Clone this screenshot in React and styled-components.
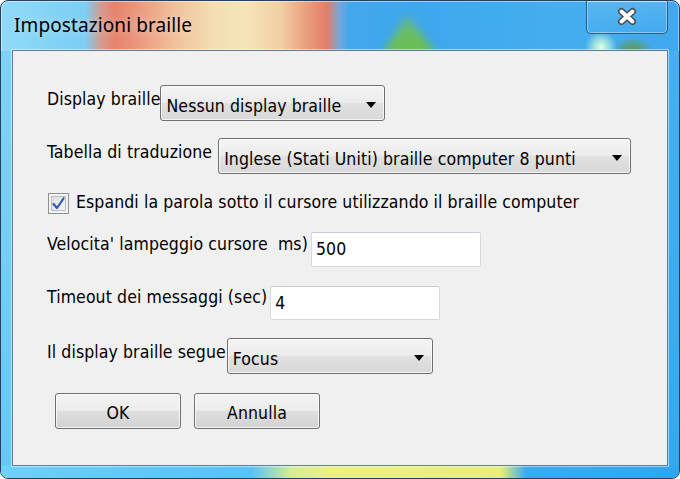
import React from "react";
import styled, { createGlobalStyle } from "styled-components";

const Global = createGlobalStyle`
  html, body { margin: 0; padding: 0; background: #ffffff; }
  body { width: 680px; height: 479px; overflow: hidden; }
`;

const Window = styled.div`
  box-sizing: border-box;
  width: 680px;
  height: 479px;
  border: 1px solid #24415e;
  border-radius: 8px;
  padding: 0 11px 12px 11px;
  display: flex;
  flex-direction: column;
  position: relative;
  overflow: hidden;
  box-shadow: inset 0 0 0 1px rgba(255, 255, 255, 0.45);
  background:
    radial-gradient(ellipse 16px 16px at 600px 46px, rgba(225, 255, 228, 1) 0%, rgba(200, 250, 210, 0.6) 50%, rgba(200, 250, 210, 0) 100%),
    radial-gradient(ellipse 20px 12px at 632px 48px, rgba(96, 150, 70, 0.9) 0%, rgba(96, 150, 70, 0.5) 50%, rgba(100, 150, 70, 0) 100%),
    linear-gradient(90deg,
      #8fdaf8 0px, #7ccef4 84px, #d49a90 100px, #e6826c 114px,
      #eb9c80 140px, #f0c29c 175px, #f4dfb4 215px, #f5e4b8 245px, #f1cfa4 280px,
      #ea9e7e 305px, #e27e68 326px, #7aa6d6 338px, #42a8ee 348px, #3ea7ee 420px,
      #44aef0 560px, #3fa8ee 680px);
`;

const GlassBlur = styled.div`
  position: absolute;
  left: 378px;
  top: 14px;
  width: 62px;
  height: 40px;
  filter: blur(4px);
  pointer-events: none;
`;

const GlassTriangle = styled.div`
  width: 100%;
  height: 100%;
  clip-path: polygon(45% 0, 95% 100%, 5% 100%);
  background: linear-gradient(180deg, rgba(120, 196, 96, 0.6), rgba(108, 190, 86, 1) 60%);
`;

const BottomGlow = styled.div`
  position: absolute;
  left: 0;
  right: 0;
  bottom: 0;
  height: 13px;
  pointer-events: none;
  background: linear-gradient(90deg,
    #6fd0f8 0px, #56c2f6 250px, #d6ec9a 290px, #eef07e 330px,
    #e8ee78 500px, #3aaaf2 525px, #2fa6f2 680px);
`;

const SideGlow = styled.div`
  position: absolute;
  top: 50px;
  bottom: 12px;
  ${(p) => (p.$side === "left" ? "left: 0;" : "right: 0;")}
  width: 12px;
  pointer-events: none;
  background: ${(p) =>
    p.$side === "left"
      ? "linear-gradient(180deg, #7fd2f6, #67c8f6)"
      : "linear-gradient(180deg, #48aef0, #35a8f2)"};
`;

const TitleBar = styled.div`
  height: 49px;
  display: flex;
  align-items: flex-start;
  position: relative;
  z-index: 1;
`;

const Title = styled.div`
  font-family: "Noto Sans", "Open Sans", sans-serif;
  font-size: 19px;
  letter-spacing: 0.1px;
  color: #000;
  line-height: 24px;
  padding-top: 12px;
  padding-left: 2px;
  text-shadow: 0 0 8px rgba(255, 255, 255, 0.5);
`;

const CloseButton = styled.div`
  margin-left: auto;
  width: 82px;
  height: 33px;
  box-sizing: border-box;
  border: 1px solid rgba(30, 55, 85, 0.7);
  border-top: none;
  border-radius: 0 0 5px 5px;
  box-shadow: inset 0 0 0 1px rgba(255, 255, 255, 0.35);
  background: linear-gradient(180deg, rgba(255, 255, 255, 0.12), rgba(255, 255, 255, 0.02));
  display: flex;
  align-items: center;
  justify-content: center;
  padding-bottom: 1px;
`;

const Client = styled.div`
  flex: 1;
  position: relative;
  z-index: 1;
  background: #f0f0f0;
  border: 1px solid #5d7c97;
  box-shadow: 0 0 0 1px rgba(255, 255, 255, 0.5);
  display: flex;
  flex-direction: column;
  font-family: "DejaVu Sans Condensed", "DejaVu Sans", sans-serif;
  font-stretch: condensed;
  font-size: 17.5px;
  letter-spacing: 0.1px;
  color: #000;
`;

const Row = styled.div`
  display: flex;
  align-items: flex-start;
  margin-top: ${(p) => p.$mt}px;
  padding-left: ${(p) => p.$pl ?? 34}px;
  height: ${(p) => p.$h}px;
  gap: ${(p) => p.$gap ?? 0}px;
`;

const Label = styled.span`
  line-height: 20px;
  padding-top: ${(p) => p.$pt ?? 4}px;
  white-space: pre;
  padding-right: ${(p) => p.$pr ?? 1}px;
`;

const Select = styled.div`
  box-sizing: border-box;
  width: ${(p) => p.$w}px;
  height: 36px;
  border: 1px solid #707070;
  border-radius: 3px;
  background: linear-gradient(180deg, #f4f4f4 0%, #ececec 48%, #e0e0e0 52%, #d9d9d9 100%);
  box-shadow: inset 0 0 0 1px rgba(255, 255, 255, 0.7);
  display: flex;
  align-items: flex-start;
  padding: 10px 8px 0 5px;
  line-height: 20px;
`;

const SelectText = styled.span`
  flex: 1;
  white-space: nowrap;
`;

const Arrow = styled.span`
  width: 0;
  height: 0;
  border-left: 5.5px solid transparent;
  border-right: 5.5px solid transparent;
  border-top: 6px solid #000;
  margin-top: 6px;
`;

const Input = styled.div`
  box-sizing: border-box;
  width: 170px;
  height: ${(p) => p.$h}px;
  background: #fff;
  border: 1px solid #d5dae0;
  border-top-color: #c6ccd3;
  border-radius: 2px;
  padding: 6px 0 0 4px;
  line-height: 20px;
`;

const CheckBox = styled.span`
  box-sizing: border-box;
  width: 21px;
  height: 21px;
  border: 1px solid #8e8f8f;
  background: linear-gradient(135deg, #dcdcdc, #f6f6f6);
  box-shadow: inset 0 0 0 2px #f4f4f4, inset 0 0 0 3px #b8bcc4;
  display: flex;
  align-items: center;
  justify-content: center;
`;

const CheckLabel = styled.span`
  line-height: 20px;
  margin-top: -1px;
  white-space: nowrap;
`;

const Button = styled.div`
  box-sizing: border-box;
  width: 126px;
  height: 36px;
  border: 1px solid #707070;
  border-radius: 3px;
  background: linear-gradient(180deg, #f4f4f4 0%, #ececec 48%, #dedede 52%, #d2d2d2 100%);
  box-shadow: inset 0 0 0 1px rgba(255, 255, 255, 0.75);
  display: flex;
  justify-content: center;
  align-items: flex-start;
  padding-top: 9px;
  line-height: 20px;
`;

const CloseIcon = () => (
  <svg width="22" height="19" viewBox="0 0 22 19">
    <g strokeLinecap="round" strokeLinejoin="round">
      <path d="M5.5 4.5 L16.5 14.5 M16.5 4.5 L5.5 14.5" stroke="#4b4b4f" strokeWidth="7" fill="none" />
      <path d="M5.5 4.5 L16.5 14.5 M16.5 4.5 L5.5 14.5" stroke="#ffffff" strokeWidth="4" fill="none" />
    </g>
  </svg>
);

const CheckMark = () => (
  <svg width="15" height="15" viewBox="0 0 15 15">
    <path
      d="M2.5 8 L6 12 L12.5 2.5"
      stroke="#3558b0"
      strokeWidth="2.2"
      fill="none"
      strokeLinecap="round"
      strokeLinejoin="round"
    />
  </svg>
);

export default function App() {
  return (
    <>
      <Global />
      <Window>
        <GlassBlur>
          <GlassTriangle />
        </GlassBlur>
        <SideGlow $side="left" />
        <SideGlow $side="right" />
        <BottomGlow />
        <TitleBar>
          <Title>Impostazioni braille</Title>
          <CloseButton>
            <CloseIcon />
          </CloseButton>
        </TitleBar>
        <Client>
          <Row $mt={34} $h={36}>
            <Label $pr={0}>Display braille</Label>
            <Select $w={225}>
              <SelectText>Nessun display braille</SelectText>
              <Arrow />
            </Select>
          </Row>
          <Row $mt={17} $h={36}>
            <Label $pr={6}>Tabella di traduzione</Label>
            <Select $w={413}>
              <SelectText>Inglese (Stati Uniti) braille computer 8 punti</SelectText>
              <Arrow />
            </Select>
          </Row>
          <Row $mt={19} $h={21} $pl={35} $gap={7}>
            <CheckBox>
              <CheckMark />
            </CheckBox>
            <CheckLabel>Espandi la parola sotto il cursore utilizzando il braille computer</CheckLabel>
          </Row>
          <Row $mt={18} $h={35}>
            <Label $pt={2} $pr={3}>{"Velocita' lampeggio cursore  ms)"}</Label>
            <Input $h={35}>500</Input>
          </Row>
          <Row $mt={19} $h={34}>
            <Label $pt={1} $pr={3}>Timeout dei messaggi (sec)</Label>
            <Input $h={34}>4</Input>
          </Row>
          <Row $mt={18} $h={36}>
            <Label>Il display braille segue</Label>
            <Select $w={206}>
              <SelectText>Focus</SelectText>
              <Arrow />
            </Select>
          </Row>
          <Row $mt={19} $h={36} $pl={42} $gap={13}>
            <Button>OK</Button>
            <Button>Annulla</Button>
          </Row>
        </Client>
      </Window>
    </>
  );
}
